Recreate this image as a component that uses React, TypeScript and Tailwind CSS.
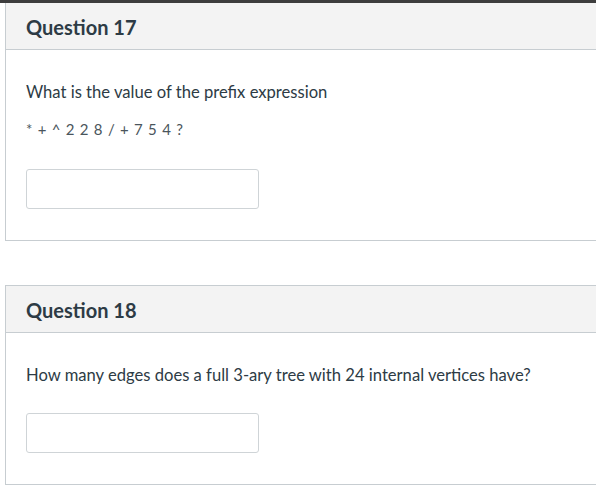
import React from 'react';

type Question = {
  title: string;
  lines: React.ReactNode[];
};

const questions: Question[] = [
  {
    title: 'Question 17',
    lines: [
      <p key="a" className="text-[16.6px] leading-5">What is the value of the prefix expression</p>,
      <p key="b" className="mt-[17px] text-[15px] leading-5 tracking-[0.05em] text-[#4a555c]">* + ^ 2 2 8 / + 7 5 4 ?</p>,
    ],
  },
  {
    title: 'Question 18',
    lines: [
      <p key="a" className="text-[16.6px] leading-5">How many edges does a full 3-ary tree with 24 internal vertices have?</p>,
    ],
  },
];

const QuestionCard: React.FC<{ q: Question; first?: boolean }> = ({ q, first }) => (
  <div className={`ml-[5px] w-[620px] border border-[#c7cdd1] bg-white ${first ? 'border-t-0' : ''}`}>
    <div className="flex h-[47px] items-center border-b border-[#c7cdd1] bg-[#f3f3f3] px-5">
      <h2 className="mt-[1px] text-[20px] font-bold text-[#2d3b45]">{q.title}</h2>
    </div>
    <div className="px-5 pt-[32px] pb-[31px] text-[#2d3b45]">
      {q.lines}
      <input
        type="text"
        className={`block h-[40px] w-[233px] rounded-[3px] border border-[#cfd4d7] bg-white outline-none ${first ? 'mt-[30px]' : 'mt-[28px]'}`}
      />
    </div>
  </div>
);

export default function App() {
  return (
    <div className="h-[494px] w-[596px] overflow-hidden bg-white font-['Lato',sans-serif]">
      <div className="h-[3px] bg-[#3d3d3d]" />
      <QuestionCard q={questions[0]} first />
      <div className="h-[44px]" />
      <QuestionCard q={questions[1]} />
    </div>
  );
}
